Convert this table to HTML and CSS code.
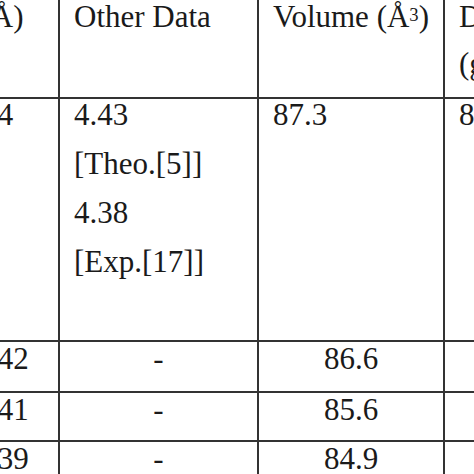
FILE: index.html
```html
<!DOCTYPE html>
<html>
<head>
<meta charset="utf-8">
<link rel="stylesheet" href="styles.css">
</head>
<body>
<div class="viewport">
<table class="data">
  <colgroup>
    <col class="c1"><col class="c2"><col class="c3"><col class="c4">
  </colgroup>
  <tr class="head">
    <td><div class="lines head-lines"><span>a (Å)</span></div></td>
    <td><div class="lines head-lines"><span>Other Data</span></div></td>
    <td><div class="lines head-lines"><span>Volume (Å<sup>3</sup>)</span></div></td>
    <td><div class="lines head-lines"><span>Density</span><span>(g/cm<sup>3</sup>)</span></div></td>
  </tr>
  <tr class="r1">
    <td><div class="lines"><span>4.44</span></div></td>
    <td><div class="lines"><span>4.43</span><span>[Theo.[5]]</span><span>4.38</span><span>[Exp.[17]]</span></div></td>
    <td><div class="lines"><span>87.3</span></div></td>
    <td><div class="lines"><span>8.21</span></div></td>
  </tr>
  <tr class="r2 short">
    <td>4.42</td><td>-</td><td>86.6</td><td>8.28</td>
  </tr>
  <tr class="r3 short">
    <td>4.41</td><td>-</td><td>85.6</td><td>8.38</td>
  </tr>
  <tr class="r4 short">
    <td>4.39</td><td>-</td><td>84.9</td><td>8.45</td>
  </tr>
</table>
</div>
</body>
</html>
```
FILE: styles.css
```css
html, body {
  margin: 0;
  padding: 0;
  background: #fff;
}
.viewport {
  width: 474px;
  height: 474px;
  overflow: hidden;
}
.data {
  margin-left: -57px;
  margin-top: -11px;
  border-collapse: collapse;
  table-layout: fixed;
  width: 630px;
  font-family: "Liberation Serif", "DejaVu Serif", serif;
  font-size: 31px;
  line-height: 32px;
  color: #1a1a1a;
  font-variant-numeric: oldstyle-nums;
}
.c1 { width: 115px; }
.c2 { width: 199px; }
.c3 { width: 186px; }
.c4 { width: 130px; }
.data td {
  border: 2px solid #333;
  padding: 0 14px;
  vertical-align: top;
  white-space: nowrap;
}
.lines {
  display: flex;
  flex-direction: column;
  gap: 17px;
}
.head-lines { gap: 15px; }
.head td { height: 108px; padding-top: 10px; box-sizing: border-box; }
.r1 td { height: 243px; padding-top: 0; box-sizing: border-box; }
.short td { text-align: center; padding-top: 1px; box-sizing: border-box; }
.r2 td { height: 51px; }
.r3 td { height: 49px; }
.r4 td { height: 49px; }
sup {
  font-size: 0.6em;
  line-height: 0;
  vertical-align: 0.3em;
}
```
